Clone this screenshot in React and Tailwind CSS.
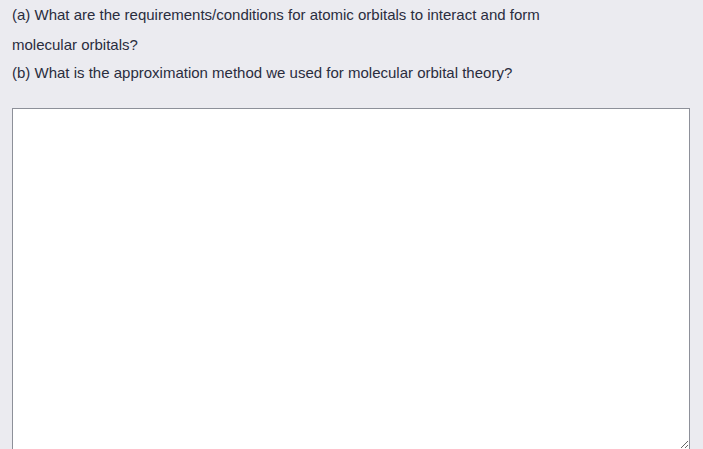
import React from "react";

export default function App() {
  return (
    <div className="h-screen bg-[#ebebf0] text-[#2a2d3e] overflow-hidden" style={{ fontFamily: '"Liberation Sans", Arial, sans-serif' }}>
      <div className="px-3">
        <p className="text-[15px] leading-[30px] w-[560px]">
          (a) What are the requirements/conditions for atomic orbitals to interact and form molecular orbitals?
        </p>
        <p className="text-[15px] leading-[26px]">
          (b) What is the approximation method we used for molecular orbital theory?
        </p>
        <textarea
          className="mt-[22px] block w-[678px] h-[342px] bg-white border border-[#8d9099] outline-none resize-y"
          defaultValue=""
        />
      </div>
    </div>
  );
}
